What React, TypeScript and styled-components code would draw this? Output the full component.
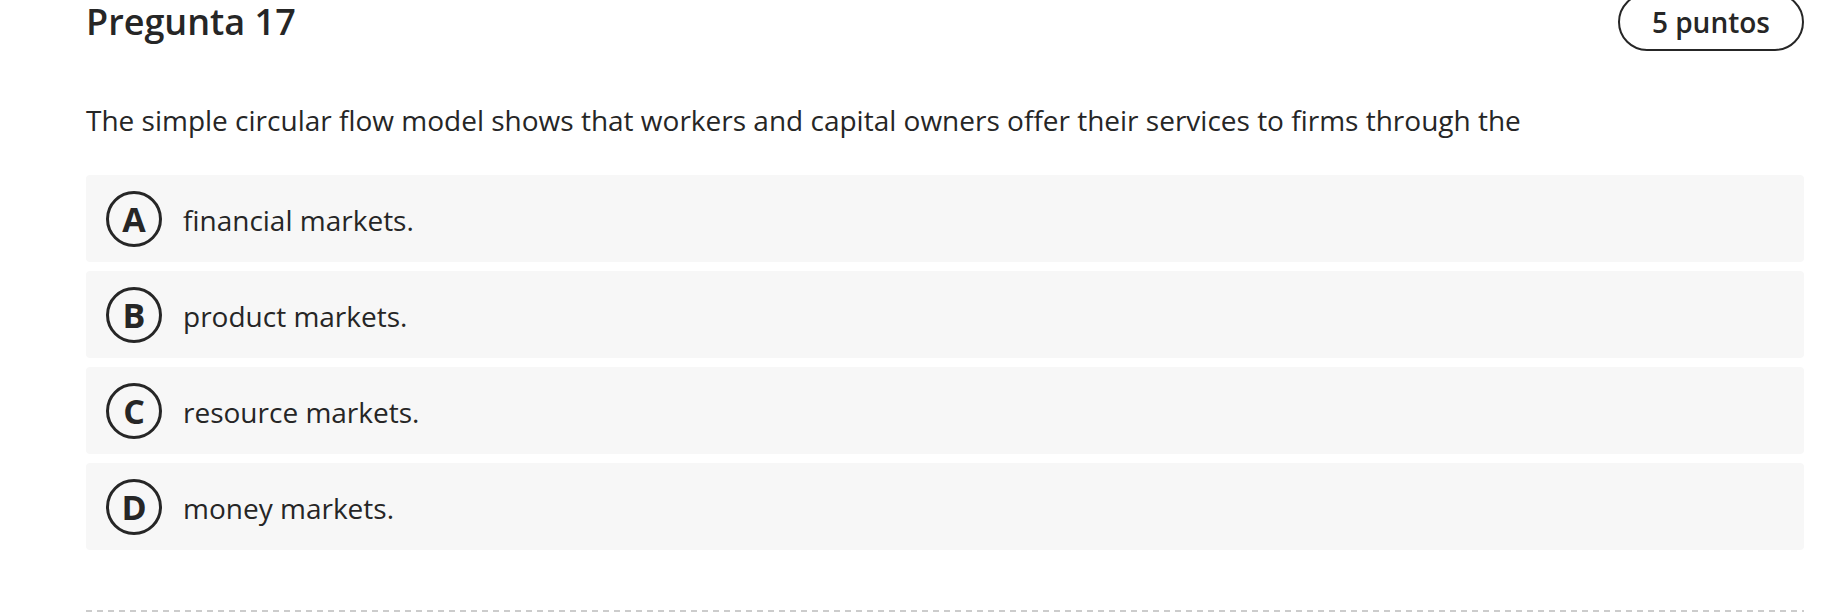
import styled, { createGlobalStyle } from "styled-components"

type OptionType = {
    letter: string
    text: string
}

const options: OptionType[] = [
    { letter: "A", text: "financial markets." },
    { letter: "B", text: "product markets." },
    { letter: "C", text: "resource markets." },
    { letter: "D", text: "money markets." },
]

const GlobalStyle = createGlobalStyle`
    html, body {
        margin: 0;
        padding: 0;
        background: #fff;
        overflow: hidden;
    }
    body {
        font-family: "Open Sans", "Noto Sans", sans-serif;
        color: #262626;
    }
`

const Page = styled.div`
    width: 1835px;
    height: 613px;
    box-sizing: border-box;
    padding: 0 31px 0 86px;
    overflow: hidden;
`
const Question = styled.section`
    display: flex;
    flex-direction: column;
`
const Header = styled.div`
    display: flex;
    align-items: center;
    justify-content: space-between;
    height: 58px;
    margin-top: -7px;
`
const Title = styled.h2`
    margin: 0;
    font-size: 36px;
    font-weight: 600;
    line-height: 1;
`
const Points = styled.span`
    display: flex;
    align-items: center;
    box-sizing: border-box;
    height: 58px;
    padding: 0 32px;
    border: 2px solid #262626;
    border-radius: 29px;
    font-size: 28px;
    font-weight: 600;
`
const Statement = styled.p`
    margin: 47px 0 32px;
    font-size: 28px;
    line-height: 45px;
`
const OptionList = styled.div`
    display: flex;
    flex-direction: column;
    gap: 9px;
`
const OptionRow = styled.div`
    display: flex;
    align-items: center;
    height: 87px;
    padding-left: 20px;
    gap: 21px;
    background: #f7f7f7;
    border-radius: 4px;
`
const Letter = styled.span`
    display: flex;
    align-items: center;
    justify-content: center;
    box-sizing: border-box;
    width: 56px;
    height: 56px;
    flex-shrink: 0;
    border: 3px solid #262626;
    border-radius: 50%;
    font-size: 34px;
    font-weight: 700;
    line-height: 1;
`
const OptionText = styled.span`
    font-size: 28px;
    line-height: 1;
    padding-top: 2px;
`
const Divider = styled.div`
    height: 2px;
    margin-top: 60px;
    background: repeating-linear-gradient(to right, #cccccc 0 6px, transparent 6px 11px);
`

export default function App() {
    return (
        <>
            <GlobalStyle />
            <Page>
                <Question>
                    <Header>
                        <Title>Pregunta 17</Title>
                        <Points>5 puntos</Points>
                    </Header>
                    <Statement>
                        The simple circular flow model shows that workers and capital owners offer their services to firms through the
                    </Statement>
                    <OptionList>
                        {options.map((o) => (
                            <OptionRow key={o.letter}>
                                <Letter>{o.letter}</Letter>
                                <OptionText>{o.text}</OptionText>
                            </OptionRow>
                        ))}
                    </OptionList>
                    <Divider />
                </Question>
            </Page>
        </>
    )
}
